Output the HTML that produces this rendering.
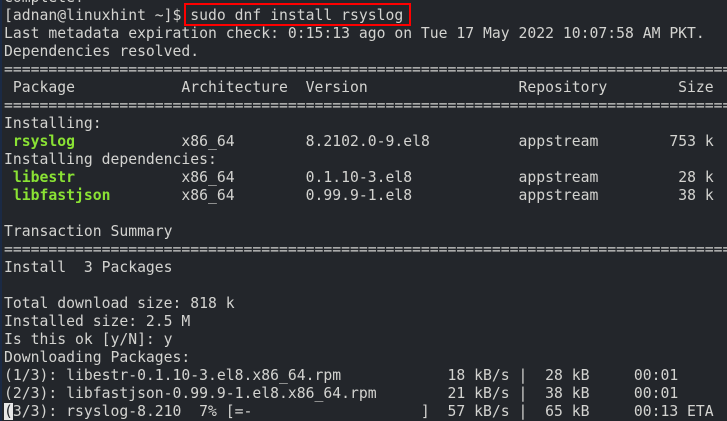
<!DOCTYPE html>
<html><head><meta charset="utf-8"><style>
html,body{margin:0;padding:0;width:727px;height:421px;overflow:hidden;background:#23262b;}
body{position:relative;}
.edge{position:absolute;left:0;top:0;width:2px;height:421px;background:#1b2a45;}
pre{position:absolute;left:4px;top:-11px;width:723px;height:432px;overflow:hidden;margin:0;font-family:"DejaVu Sans Mono","Liberation Mono",monospace;font-size:14.74px;line-height:18px;color:#d3d3d0;white-space:pre;}
.g{color:#8ae234;font-weight:bold;}
.box{position:absolute;left:184px;top:3px;width:223px;height:19px;border:2px solid #f00;}
.cur{background:#e8e8e8;color:#23262b;}
</style></head><body>
<div class="edge"></div>
<pre>Complete!
[adnan@linuxhint ~]$ sudo dnf install rsyslog
Last metadata expiration check: 0:15:13 ago on Tue 17 May 2022 10:07:58 AM PKT.
Dependencies resolved.
==========================================================================================
 Package            Architecture  Version                 Repository        Size
==========================================================================================
Installing:
 <span class="g">rsyslog</span>            x86_64        8.2102.0-9.el8          appstream        753 k
Installing dependencies:
 <span class="g">libestr</span>            x86_64        0.1.10-3.el8            appstream         28 k
 <span class="g">libfastjson</span>        x86_64        0.99.9-1.el8            appstream         38 k

Transaction Summary
==========================================================================================
Install  3 Packages

Total download size: 818 k
Installed size: 2.5 M
Is this ok [y/N]: y
Downloading Packages:
(1/3): libestr-0.1.10-3.el8.x86_64.rpm            18 kB/s |  28 kB     00:01
(2/3): libfastjson-0.99.9-1.el8.x86_64.rpm        21 kB/s |  38 kB     00:01
<span class="cur">(</span>3/3): rsyslog-8.210  7% [=-                   ]  57 kB/s |  65 kB     00:13 ETA</pre>
<div class="box"></div>
</body></html>
